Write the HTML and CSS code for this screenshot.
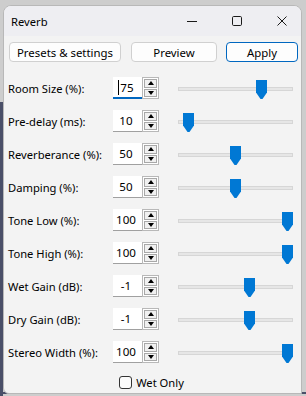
FILE: index.html
```html
<!DOCTYPE html>
<html lang="en">
<head>
  <meta charset="UTF-8">
  <meta name="viewport" content="width=device-width, initial-scale=1.0">
  <title>Reverb</title>
  <link rel="stylesheet" href="styles.css">
</head>
<body>
  <div class="window">
    <div class="titlebar">
      <span class="title">Reverb</span>
      <div class="controls">
        <svg width="10" height="10" viewBox="0 0 10 10"><path d="M0 5.5H10" stroke="#1a1a1a" stroke-width="1"/></svg>
        <svg width="10" height="10" viewBox="0 0 10 10"><rect x="0.5" y="0.5" width="9" height="9" rx="1.2" fill="none" stroke="#1a1a1a" stroke-width="1"/></svg>
        <svg width="10" height="10" viewBox="0 0 10 10"><path d="M0.5 0.5L9.5 9.5M9.5 0.5L0.5 9.5" stroke="#1a1a1a" stroke-width="1"/></svg>
      </div>
    </div>

    <div class="toolbar">
      <button class="btn btn-presets">Presets &amp; settings</button>
      <button class="btn btn-preview">Preview</button>
      <button class="btn btn-apply">Apply</button>
    </div>

    <div class="params" id="params"></div>

    <label class="wet-only">
      <span class="check"></span>
      <span>Wet Only</span>
    </label>
  </div>

  <script>
    // name, value, min, max
    const params = [
      ['Room Size (%):', 75, 0, 100],
      ['Pre-delay (ms):', 10, 0, 200],
      ['Reverberance (%):', 50, 0, 100],
      ['Damping (%):', 50, 0, 100],
      ['Tone Low (%):', 100, 0, 100],
      ['Tone High (%):', 100, 0, 100],
      ['Wet Gain (dB):', -1, -20, 10],
      ['Dry Gain (dB):', -1, -20, 10],
      ['Stereo Width (%):', 100, 0, 100]
    ];

    const thumb = '<svg width="11" height="19" viewBox="0 0 11 19"><path d="M0 0H11V12.5L6.5 19H4.5L0 12.5Z" fill="#0078d4"/></svg>';
    const list = document.getElementById('params');

    params.forEach((p, i) => {
      const pct = (p[1] - p[2]) / (p[3] - p[2]);
      const row = document.createElement('div');
      row.className = 'row';
      row.innerHTML =
        '<span class="label">' + p[0] + '</span>' +
        '<span class="field' + (i === 0 ? ' focused' : '') + '">' +
          (i === 0 ? '<span class="caret"></span>' : '') + p[1] + '</span>' +
        '<span class="spin"><span class="spin-btn up"></span><span class="spin-btn down"></span></span>' +
        '<span class="slider"><span class="track"></span>' +
          '<span class="thumb" style="left:' + Math.round(pct * 104) + 'px">' + thumb + '</span></span>';
      list.appendChild(row);
    });
  </script>
</body>
</html>
```

FILE: styles.css
```css
html {
  background:
    linear-gradient(#4a4f68, #4a4f68) 0 102px / 3px 100% no-repeat,
    linear-gradient(#4a4f68, #4a4f68) left bottom / 100% 2px no-repeat,
    #cdcdcd;
}

body {
  margin: 0;
  font-family: 'Noto Sans', sans-serif;
  font-size: 11.2px;
  color: #000;
}

.window {
  box-sizing: border-box;
  width: 299px;
  height: 389px;
  margin: 5px 0 0 3px;
  background-color: #f3f3f3;
  border: 1px solid #b8b8b8;
  border-radius: 8px 8px 0 6px;
  overflow: hidden;
}

.titlebar {
  height: 30px;
  display: flex;
  align-items: center;
  justify-content: space-between;
  background-color: #eeeef2;
  padding: 0 14px 0 7px;
}

.controls {
  display: flex;
  gap: 35px;
  align-items: center;
}

.toolbar {
  display: flex;
  padding: 6px 0 0 5px;
}

.btn {
  box-sizing: border-box;
  height: 20px;
  padding: 0;
  font-family: inherit;
  font-size: 11.4px;
  color: #000;
  background-color: #fdfdfd;
  border: 1px solid #d0d0d0;
  border-radius: 4px;
}

.btn-presets {
  width: 112px;
}

.btn-preview {
  width: 86px;
  margin-left: 10px;
}

.btn-apply {
  width: 72px;
  margin-left: 9px;
  border-color: #0067c0;
}

.params {
  display: flex;
  flex-direction: column;
  gap: 11px;
  padding: 15px 0 0 4px;
}

.row {
  display: flex;
  align-items: center;
  height: 22px;
}

.label {
  width: 105px;
}

.field {
  box-sizing: border-box;
  width: 29px;
  height: 22px;
  padding-right: 3px;
  display: flex;
  align-items: center;
  justify-content: center;
  font-size: 11.6px;
  background-color: #fff;
  border-bottom: 1px solid #a0a0a0;
}

.field.focused {
  border-bottom: 2px solid #0067c0;
}

.caret {
  width: 1px;
  height: 15px;
  background-color: #000;
  margin-right: 1px;
}

.spin {
  box-sizing: border-box;
  width: 17px;
  height: 22px;
  padding: 1px;
  display: flex;
  flex-direction: column;
  gap: 1px;
  border: 1px solid #b8b8b8;
  background-color: #fff;
}

.spin-btn {
  flex: 1;
  display: flex;
  align-items: center;
  justify-content: center;
  border: 1px solid #a8a8a8;
  background-color: #f0f0f0;
}

.spin-btn::after {
  content: '';
  border-left: 3.5px solid transparent;
  border-right: 3.5px solid transparent;
}

.up::after {
  border-bottom: 4px solid #000;
}

.down::after {
  border-top: 4px solid #000;
}

.slider {
  position: relative;
  width: 115px;
  height: 22px;
  margin-left: 19px;
}

.track {
  position: absolute;
  left: 0;
  right: 0;
  top: 10px;
  height: 2px;
  background-color: #e6e6e6;
  border: 1px solid #d6d6d6;
}

.thumb {
  position: absolute;
  top: 3px;
  line-height: 0;
}

.wet-only {
  display: flex;
  align-items: center;
  justify-content: center;
  gap: 4px;
  margin: 12px 2px 0 0;
}

.check {
  box-sizing: border-box;
  width: 13px;
  height: 13px;
  border: 1px solid #333;
  border-radius: 3px;
  background-color: #fbfbfb;
}
```
